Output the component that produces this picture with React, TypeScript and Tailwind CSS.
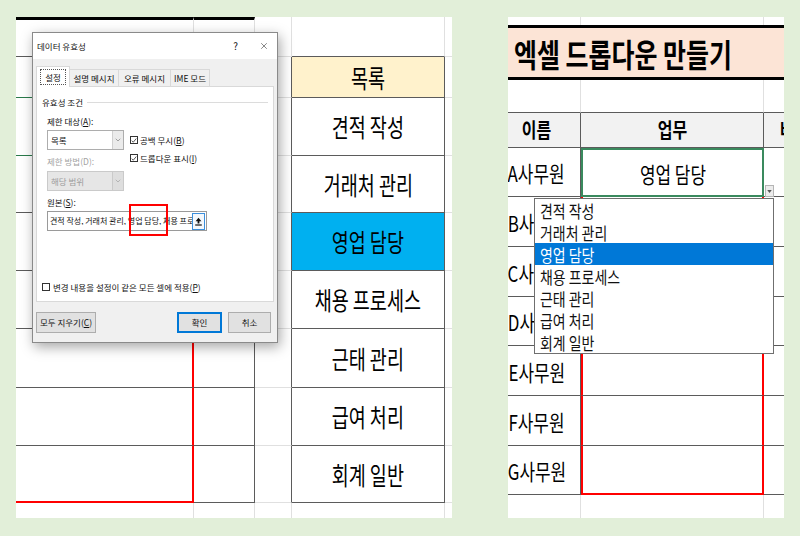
import clsx from 'clsx'
import { ChevronDown, X } from 'lucide-react'
import { Fragment, type ReactNode } from 'react'

const ITEMS = ['견적 작성', '거래처 관리', '영업 담당', '채용 프로세스', '근태 관리', '급여 처리', '회계 일반']
const NAMES = ['A사무원', 'B사무원', 'C사무원', 'D사무원', 'E사무원', 'F사무원', 'G사무원']

const LINE = {
  r: {
    light: 'border-r border-r-[#e0e0e0]',
    dark: 'border-r border-r-[#5b5b5b]',
    red: 'border-r-2 border-r-[#ff0000]',
    none: '',
  },
  b: {
    light: 'border-b border-b-[#e0e0e0]',
    dark: 'border-b border-b-[#5b5b5b]',
    red: 'border-b-2 border-b-[#ff0000]',
    green: 'border-b border-b-[#2a7a4b]',
    none: '',
  },
}

type RLine = keyof typeof LINE.r
type BLine = keyof typeof LINE.b

function Cell({ r, b, className, children }: { r: RLine; b: BLine; className?: string; children?: ReactNode }) {
  return (
    <div className={clsx('flex min-w-0 items-center justify-center', LINE.r[r], LINE.b[b], className)}>{children}</div>
  )
}

function Check({ checked }: { checked?: boolean }) {
  return (
    <span className="flex h-[8px] w-[8px] shrink-0 items-center justify-center border border-[#333] bg-white">
      {checked && (
        <svg viewBox="0 0 8 8" className="h-[7px] w-[7px]">
          <path d="M1 4.2 L3 6.3 L7 1.4" fill="none" stroke="#222" strokeWidth="1" />
        </svg>
      )}
    </span>
  )
}

function Combo({ text, disabled }: { text: string; disabled?: boolean }) {
  return (
    <div
      className={clsx(
        'flex h-[20px] w-[77px] items-center border',
        disabled ? 'border-[#cacaca] bg-[#e6e6e6] text-[#9d9d9d]' : 'border-[#adadad] bg-white text-[#111]',
      )}>
      <span className="flex-1 pl-[3px]">{text}</span>
      <span
        className={clsx(
          'flex h-full w-[11px] items-center justify-center border-l',
          disabled ? 'border-[#cacaca] bg-[#dedede] text-[#8a8a8a]' : 'border-[#d0d0d0] bg-[#ebebeb] text-[#555]',
        )}>
        <ChevronDown size={8} strokeWidth={1.5} />
      </span>
    </div>
  )
}

function Dialog() {
  return (
    <div className="absolute left-[16px] top-[15px] flex h-[311px] w-[246px] flex-col border border-[#8a8a8a] bg-[#f0f0f0] text-[8.5px] leading-none text-[#111] shadow-[2px_4px_12px_rgba(0,0,0,0.35)]">
      <div className="flex h-[26px] items-center bg-white pl-[4px]">
        <span>데이터 유효성</span>
        <span className="ml-auto text-[10px]">?</span>
        <X className="ml-[21px] mr-[8px]" size={10} strokeWidth={1.2} />
      </div>

      <div className="flex flex-1 flex-col px-[3px] pt-[7px]">
        <div className="relative z-10 -mb-px flex items-end">
          <div className="flex h-[21px] w-[34px] items-center justify-center border border-b-0 border-[#d9d9d9] bg-white">
            <span className="border border-dotted border-[#555] px-[4px] py-[3px]">설정</span>
          </div>
          <div className="flex h-[18px] w-[49px] items-center justify-center border border-l-0 border-[#d9d9d9]">
            설명 메시지
          </div>
          <div className="flex h-[18px] w-[52px] items-center justify-center border border-l-0 border-[#d9d9d9]">
            오류 메시지
          </div>
          <div className="flex h-[18px] w-[39px] items-center justify-center border border-l-0 border-[#d9d9d9]">
            IME 모드
          </div>
        </div>

        <div className="flex h-[216px] flex-col border border-[#d9d9d9] bg-white">
          <div className="ml-[5px] mr-[5px] mt-[9px] flex h-[12px] items-center">
            <span>유효성 조건</span>
            <span className="ml-[4px] h-px flex-1 bg-[#dcdcdc]" />
          </div>
          <div className="ml-[10px] mt-[7px] flex h-[12px] items-center">
            제한 대상(<u>A</u>):
          </div>
          <div className="ml-[10px] mt-[3px] flex gap-[6px]">
            <div className="flex flex-col">
              <Combo text="목록" />
              <div className="mt-[5px] flex h-[12px] items-center text-[#a3a3a3]">제한 방법(D):</div>
              <div className="mt-[4px]">
                <Combo text="해당 범위" disabled />
              </div>
            </div>
            <div className="flex flex-col gap-[6px] pt-[4px]">
              <div className="flex h-[12px] items-center gap-[2px]">
                <Check checked />
                <span>
                  공백 무시(<u>B</u>)
                </span>
              </div>
              <div className="flex h-[12px] items-center gap-[2px]">
                <Check checked />
                <span>
                  드롭다운 표시(<u>I</u>)
                </span>
              </div>
            </div>
          </div>
          <div className="ml-[10px] mt-[5px] flex h-[12px] items-center">
            원본(<u>S</u>):
          </div>
          <div className="relative ml-[10px] mt-[3px] flex h-[20px] w-[160px] items-center border border-[#9a9a9a] bg-white text-[8px]">
            <span className="flex-1 overflow-hidden whitespace-nowrap pl-[2px]">
              견적 작성, 거래처 관리, 영업 담당, 채용 프로세스, 근태 관리
            </span>
            <span className="mr-px flex h-[17px] w-[13px] shrink-0 items-center justify-center border border-[#3c8fdc] bg-[#f4f8fc]">
              <svg viewBox="0 0 9 9" className="h-[9px] w-[9px]">
                <path d="M4.5 0.8 L1.6 4.2 H3.6 V6.6 H5.4 V4.2 H7.4 Z" fill="#111" />
                <path d="M1.2 8 H7.8" stroke="#111" strokeWidth="1.2" />
              </svg>
            </span>
            <span className="absolute left-[81px] top-[-8px] h-[32px] w-[39px] border-2 border-[#ff0000]" />
          </div>
          <div className="ml-[5px] mt-[50px] flex h-[12px] items-center gap-[3px]">
            <Check />
            <span>
              변경 내용을 설정이 같은 모든 셀에 적용(<u>P</u>)
            </span>
          </div>
        </div>

        <div className="mt-[10px] flex">
          <button className="flex h-[21px] w-[60px] items-center justify-center border border-[#adadad] bg-[#e1e1e1]">
            모두 지우기(<u>C</u>)
          </button>
          <div className="ml-auto mr-[3px] flex gap-[6px]">
            <button className="flex h-[21px] w-[45px] items-center justify-center border-2 border-[#0078d7] bg-[#e1e1e1]">
              확인
            </button>
            <button className="flex h-[21px] w-[43px] items-center justify-center border border-[#adadad] bg-[#e1e1e1]">
              취소
            </button>
          </div>
        </div>
      </div>
    </div>
  )
}

function LeftSheet() {
  const rows = Array.from({ length: 10 }, (_, i) => i)

  return (
    <div className="relative h-[501px] w-[436px] shrink-0 overflow-hidden bg-white">
      <div className="grid h-full grid-cols-[178px_61px_37px_153px_7px] grid-rows-[40px_41px_58px_57px_58px_58px_59px_58px_57px_15px]">
        {rows.map((i) => {
          const last = i === 9
          const item = i >= 2 && i <= 8 ? ITEMS[i - 2] : null
          return (
            <Fragment key={i}>
              <Cell
                r={i === 0 || last ? 'light' : i >= 3 ? 'red' : 'dark'}
                b={last ? 'none' : i === 8 ? 'red' : i === 1 || i === 2 ? 'green' : 'dark'}
                className={i === 0 ? 'border-t-[3px] border-t-black' : ''}
              />
              <Cell
                r={i === 0 || last ? 'light' : 'dark'}
                b={last ? 'none' : 'dark'}
                className={i === 0 ? 'border-t-[3px] border-t-black' : ''}
              />
              <Cell r={i >= 1 && i <= 8 ? 'dark' : 'light'} b={last ? 'none' : 'light'} />
              <Cell
                r={i === 0 || last ? 'light' : 'dark'}
                b={last ? 'none' : 'dark'}
                className={clsx(i === 1 && 'bg-[#fff2cc]', i === 4 && 'bg-[#00b0f0]')}>
                {i === 1 && <span className="inline-block scale-x-[0.74] whitespace-nowrap text-[25px] leading-none">목록</span>}
                {item && <span className="inline-block scale-x-[0.74] whitespace-nowrap text-[25px] leading-none">{item}</span>}
              </Cell>
              <Cell r="none" b={last ? 'none' : 'light'} />
            </Fragment>
          )
        })}
      </div>

      <Dialog />
    </div>
  )
}

function RightSheet() {
  const data = Array.from({ length: 7 }, (_, i) => i)

  return (
    <div className="relative h-[501px] w-[276px] shrink-0 overflow-hidden bg-white">
      <div className="-ml-[15px] grid h-full w-[331px] grid-cols-[88px_183px_60px] grid-rows-[8px_55px_33px_35px_49px_50px_50px_49px_50px_50px_49px_23px]">
        <Cell r="light" b="none" />
        <Cell r="light" b="none" />
        <Cell r="none" b="none" />

        <div className="col-span-3 flex items-center border-y-[3px] border-black bg-[#fce4d6] pl-[21px]">
          <span className="inline-block origin-left scale-x-[0.78] whitespace-nowrap text-[32px] font-bold leading-none text-black">
            엑셀 드롭다운 만들기
          </span>
        </div>

        <Cell r="light" b="dark" />
        <Cell r="light" b="dark" />
        <Cell r="none" b="dark" />

        <Cell r="dark" b="dark" className="bg-[#f2f2f2]">
          <span className="inline-block scale-x-[0.8] whitespace-nowrap text-[20px] font-bold leading-none">이름</span>
        </Cell>
        <Cell r="dark" b="dark" className="bg-[#f2f2f2]">
          <span className="inline-block scale-x-[0.8] whitespace-nowrap text-[20px] font-bold leading-none">업무</span>
        </Cell>
        <Cell r="none" b="dark" className="bg-[#f2f2f2]">
          <span className="inline-block scale-x-[0.8] whitespace-nowrap text-[20px] font-bold leading-none">비고</span>
        </Cell>

        {data.map((i) => (
          <Fragment key={i}>
            <Cell r="dark" b="dark">
              <span className="inline-block scale-x-[0.77] whitespace-nowrap text-[22px] leading-none">{NAMES[i]}</span>
            </Cell>
            {i === 0 ? (
              <Cell r="none" b="none" className="border-2 border-[#3a8a5e]">
                <span className="inline-block scale-x-[0.77] whitespace-nowrap text-[22px] leading-none">영업 담당</span>
              </Cell>
            ) : (
              <Cell r="red" b={i === 6 ? 'red' : 'dark'} className="border-l-2 border-l-[#ff0000]" />
            )}
            <Cell r="none" b="dark" />
          </Fragment>
        ))}

        <Cell r="light" b="none" />
        <Cell r="light" b="none" />
        <Cell r="none" b="none" />
      </div>

      <div className="absolute left-[257px] top-[168px] flex h-[12px] w-[9px] items-center justify-center border border-[#b5b5b5] bg-[#ececec]">
        <svg viewBox="0 0 6 4" className="h-[3px] w-[5px]">
          <path d="M0 0 H6 L3 4 Z" fill="#555" />
        </svg>
      </div>

      <div className="absolute left-[26px] top-[181px] flex w-[240px] flex-col border border-[#6f6f6f] bg-white">
        {ITEMS.map((it, idx) => (
          <div
            key={it}
            className={clsx('flex h-[22px] items-center pl-[5px]', idx === 2 ? 'bg-[#0078d7] text-white' : 'text-[#111]')}>
            <span className="inline-block origin-left scale-x-[0.82] whitespace-nowrap text-[17px] leading-none">{it}</span>
          </div>
        ))}
      </div>
    </div>
  )
}

export default function App() {
  return (
    <div className="flex h-[536px] w-[800px] items-start bg-[#e2efd9] pl-[16px] pt-[17px] font-['Noto_Sans_CJK_KR','Noto_Sans',sans-serif] text-black">
      <LeftSheet />
      <div className="ml-[56px]">
        <RightSheet />
      </div>
    </div>
  )
}
